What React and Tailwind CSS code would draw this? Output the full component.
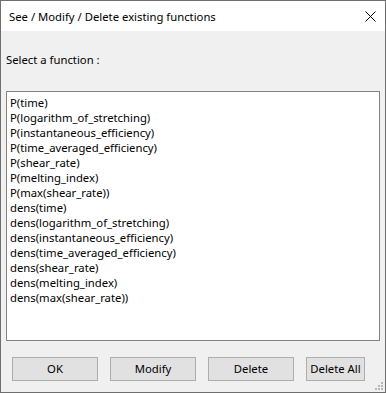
import React from "react";

const items = [
  "P(time)",
  "P(logarithm_of_stretching)",
  "P(instantaneous_efficiency)",
  "P(time_averaged_efficiency)",
  "P(shear_rate)",
  "P(melting_index)",
  "P(max(shear_rate))",
  "dens(time)",
  "dens(logarithm_of_stretching)",
  "dens(instantaneous_efficiency)",
  "dens(time_averaged_efficiency)",
  "dens(shear_rate)",
  "dens(melting_index)",
  "dens(max(shear_rate))",
];

function Btn({ children, w }) {
  return (
    <div
      className={`${w} h-[24px] bg-[#e1e1e1] border border-[#adadad] flex items-center justify-center text-[11.3px] text-black`}
    >
      {children}
    </div>
  );
}

export default function App() {
  return (
    <div
      className="w-[386px] h-[393px] border border-[#6e6e6e] bg-[#f0f0f0] flex flex-col text-black"
      style={{ fontFamily: '"Noto Sans", "Segoe UI", sans-serif' }}
    >
      <div className="h-[30px] bg-white flex items-center justify-between pl-[8px] pr-[9px] shrink-0">
        <span className="text-[11.3px] leading-[15px]">See / Modify / Delete existing functions</span>
        <svg width="11" height="11" viewBox="0 0 11 11" className="block">
          <path d="M0.5 0.5 L10.5 10.5 M10.5 0.5 L0.5 10.5" stroke="#000" strokeWidth="1" />
        </svg>
      </div>
      <div className="flex-1 flex flex-col px-[5px] relative">
        <div className="mt-[21px] text-[11.3px] leading-[15px]">Select a function :</div>
        <div className="mt-[24px] h-[250px] bg-white border border-[#828282] pt-[3px] pl-[3px] overflow-hidden">
          {items.map((it) => (
            <div key={it} className="text-[11.3px] leading-[15px] whitespace-nowrap">
              {it}
            </div>
          ))}
        </div>
        <div className="mt-[16px] ml-[6px] flex gap-[12px]">
          <Btn w="w-[86px]">OK</Btn>
          <Btn w="w-[86px]">Modify</Btn>
          <Btn w="w-[86px]">Delete</Btn>
          <Btn w="w-[59px]">Delete All</Btn>
        </div>
        <svg width="9" height="9" viewBox="0 0 9 9" className="absolute right-[1px] bottom-[1px]">
          <rect x="6" y="0" width="2" height="2" fill="#b8b8b8" />
          <rect x="3" y="3" width="2" height="2" fill="#b8b8b8" />
          <rect x="6" y="3" width="2" height="2" fill="#b8b8b8" />
          <rect x="0" y="6" width="2" height="2" fill="#b8b8b8" />
          <rect x="3" y="6" width="2" height="2" fill="#b8b8b8" />
          <rect x="6" y="6" width="2" height="2" fill="#b8b8b8" />
        </svg>
      </div>
    </div>
  );
}
